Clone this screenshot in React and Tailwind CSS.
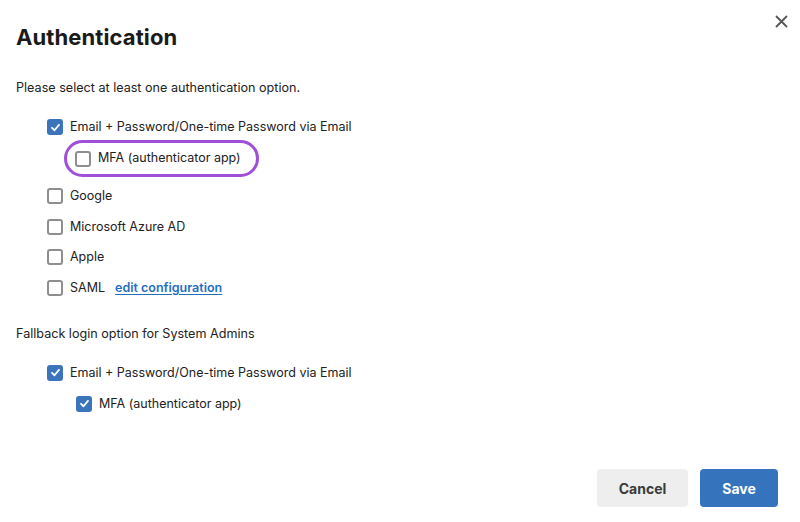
import React from "react";

const font = { fontFamily: "Inter, 'Liberation Sans', sans-serif" };

function Box({ checked }) {
  if (checked) {
    return (
      <span className="flex h-[16px] w-[16px] shrink-0 items-center justify-center rounded-[3px] bg-[#3b74bb]">
        <svg width="11" height="11" viewBox="0 0 12 12" fill="none">
          <path d="M2.2 6.3 L4.9 9 L9.8 3.2" stroke="white" strokeWidth="2" strokeLinecap="round" strokeLinejoin="round" />
        </svg>
      </span>
    );
  }
  return <span className="h-[16px] w-[16px] shrink-0 rounded-[3px] border-2 border-[#8e8e8e] bg-white" />;
}

function Row({ checked, label, h = "h-[30.6px]", indent = "pl-[31px]", children }) {
  return (
    <div className={`flex items-center ${h} ${indent}`}>
      <Box checked={checked} />
      <span className="ml-[7px] text-[12.5px] text-[#222]">{label}</span>
      {children}
    </div>
  );
}

export default function App() {
  return (
    <div className="relative flex h-[522px] w-[800px] flex-col bg-white px-4" style={font}>
      <button className="absolute right-[11px] top-[13px] flex h-[16px] w-[16px] items-center justify-center">
        <svg width="13" height="13" viewBox="0 0 13 13">
          <path d="M1.5 1.5 L11.5 11.5 M11.5 1.5 L1.5 11.5" stroke="#555" strokeWidth="1.8" strokeLinecap="round" />
        </svg>
      </button>

      <h1 className="mt-[23px] text-[22px] font-bold leading-[28px] tracking-[0.1px] text-[#1a1a1a]">Authentication</h1>

      <p className="mt-[27px] text-[12.6px] leading-[20px] text-[#222]">Please select at least one authentication option.</p>

      <div className="mt-[14px] flex flex-col">
        <Row checked label="Email + Password/One-time Password via Email" h="h-[30px]" />
        <div className="ml-[48px] -mt-[2px] flex h-[37px] w-[195px] items-center rounded-full border-[3px] border-[#a04fd8] pl-[8px]">
          <Box checked={false} />
          <span className="ml-[7px] text-[12.5px] text-[#222]">MFA (authenticator app)</span>
        </div>
        <div className="mt-[4px]" />
        <Row label="Google" />
        <Row label="Microsoft Azure AD" />
        <Row label="Apple" />
        <Row label="SAML">
          <a className="ml-[10px] text-[12.5px] font-semibold text-[#1f6fc1] underline underline-offset-2">edit configuration</a>
        </Row>
      </div>

      <p className="mt-[21px] text-[12.6px] leading-[20px] text-[#222]">Fallback login option for System Admins</p>

      <div className="mt-[13px] flex flex-col">
        <Row checked label="Email + Password/One-time Password via Email" h="h-[31px]" />
        <Row checked label="MFA (authenticator app)" h="h-[31px]" indent="pl-[60px]" />
      </div>

      <div className="mt-auto mb-[15px] mr-[6px] flex justify-end gap-[12px]">
        <button className="h-[38px] w-[91px] rounded-[4px] bg-[#eeeeee] text-[14px] font-bold text-[#3a3a3a]">Cancel</button>
        <button className="h-[38px] w-[78px] rounded-[4px] bg-[#3574bd] text-[14px] font-bold text-white">Save</button>
      </div>
    </div>
  );
}
